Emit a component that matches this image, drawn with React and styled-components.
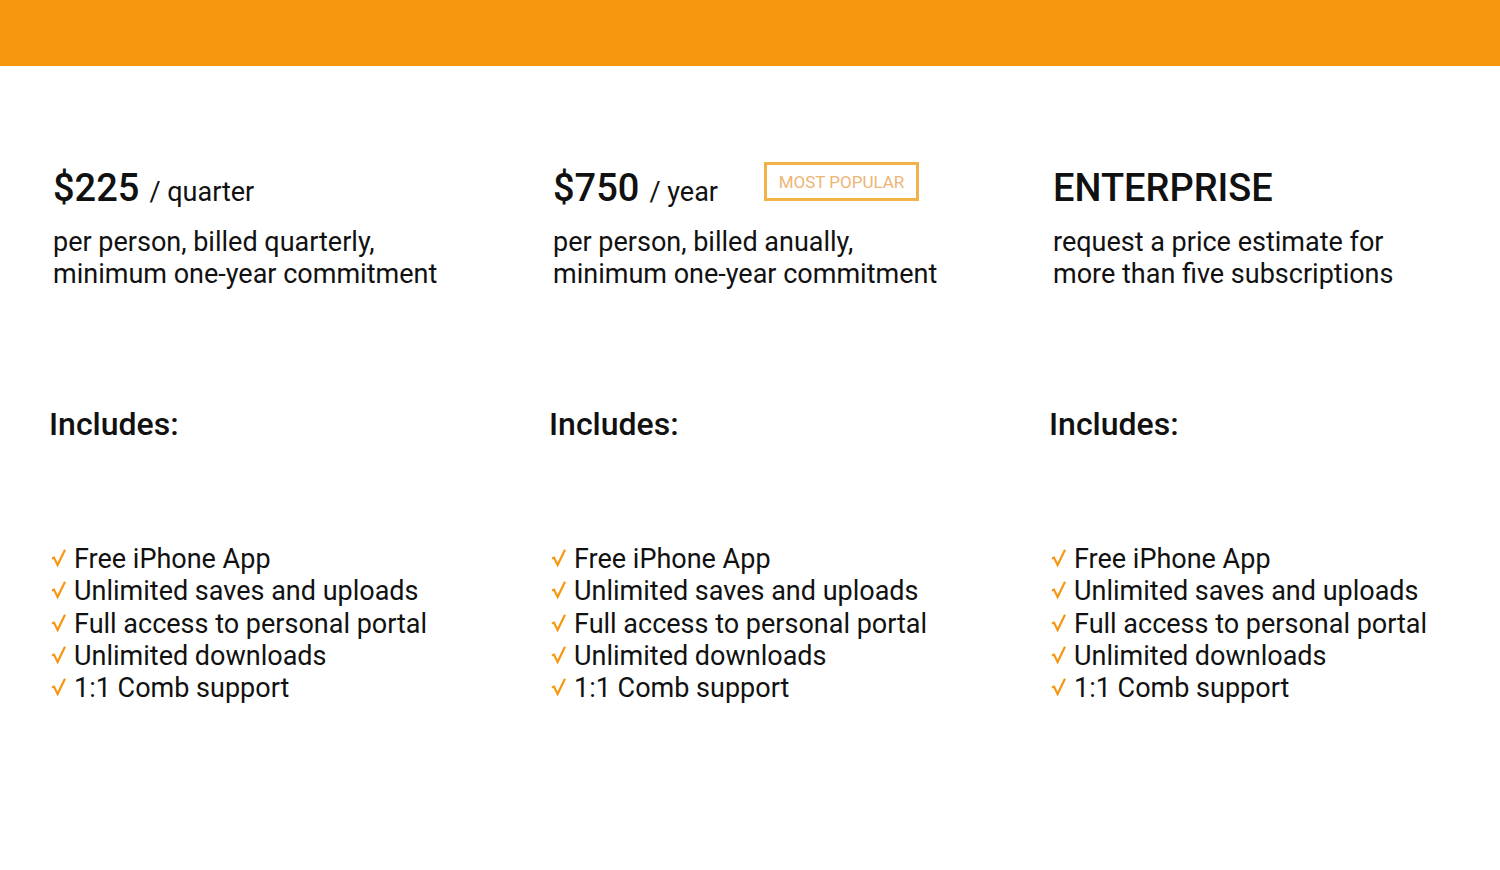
import React from 'react';
import styled, { createGlobalStyle } from 'styled-components';

const GlobalStyle = createGlobalStyle`
  body {
    margin: 0;
    background: #ffffff;
    font-family: Roboto, "Liberation Sans", sans-serif;
    color: #111111;
  }
`;

const Page = styled.div`
  width: 1500px;
  min-height: 870px;
  background: #ffffff;
`;

const TopBar = styled.header`
  height: 66px;
  background: #f7960f;
`;

const Plans = styled.main`
  display: grid;
  grid-template-columns: repeat(3, 500px);
  padding: 96px 0 0 50px;
`;

const Plan = styled.section`
  display: flex;
  flex-direction: column;
`;

const PriceRow = styled.div`
  display: flex;
  align-items: flex-start;
  height: 52px;
  padding-left: 3px;
`;

const Price = styled.h2`
  margin: 0;
  font-size: 38px;
  font-weight: 500;
  line-height: 52px;
  white-space: nowrap;
`;

const Period = styled.span`
  font-size: 27px;
  font-weight: 400;
  margin-left: 10px;
`;

const Badge = styled.div`
  margin: 0 0 0 46px;
  width: 155px;
  height: 39px;
  box-sizing: border-box;
  border: 3px solid #f2b24a;
  color: #edb575;
  font-size: 17px;
  display: flex;
  align-items: center;
  justify-content: center;
`;

const Description = styled.p`
  margin: 12px 0 0 3px;
  font-size: 27px;
  line-height: 32px;
  color: #111111;
`;

const IncludesTitle = styled.h3`
  margin: 114px 0 0 -1px;
  font-size: 32px;
  font-weight: 500;
  line-height: 40px;
`;

const Features = styled.ul`
  list-style: none;
  margin: 99px 0 0;
  padding: 0;
`;

const Feature = styled.li`
  display: block;
  font-size: 27px;
  line-height: 32.25px;
  height: 32.25px;
  color: #111111;
  white-space: nowrap;
`;

const Check = styled.svg`
  display: inline-block;
  width: 15px;
  height: 17px;
  margin: 0 8px 0 1px;
  vertical-align: 2px;
  overflow: visible;
`;

const CheckMark = () => (
  <Check viewBox="0 0 15 17" aria-hidden="true">
    <polyline
      points="1,9.5 3,8.6 6.6,16 14,0.8"
      fill="none"
      stroke="#f7960f"
      strokeWidth="2.2"
      strokeLinejoin="miter"
    />
  </Check>
);

const features = [
  'Free iPhone App',
  'Unlimited saves and uploads',
  'Full access to personal portal',
  'Unlimited downloads',
  '1:1 Comb support',
];

const plans = [
  {
    price: '$225',
    period: '/ quarter',
    lines: ['per person, billed quarterly,', 'minimum one-year commitment'],
  },
  {
    price: '$750',
    period: '/ year',
    popular: true,
    lines: ['per person, billed anually,', 'minimum one-year commitment'],
  },
  {
    price: 'ENTERPRISE',
    lines: ['request a price estimate for', 'more than five subscriptions'],
  },
];

export default function App() {
  return (
    <Page>
      <GlobalStyle />
      <TopBar />
      <Plans>
        {plans.map((plan) => (
          <Plan key={plan.price}>
            <PriceRow>
              <Price>
                {plan.price}
                {plan.period && <Period>{plan.period}</Period>}
              </Price>
              {plan.popular && <Badge>MOST POPULAR</Badge>}
            </PriceRow>
            <Description>
              {plan.lines[0]}
              <br />
              {plan.lines[1]}
            </Description>
            <IncludesTitle>Includes:</IncludesTitle>
            <Features>
              {features.map((f) => (
                <Feature key={f}>
                  <CheckMark />
                  {f}
                </Feature>
              ))}
            </Features>
          </Plan>
        ))}
      </Plans>
    </Page>
  );
}
